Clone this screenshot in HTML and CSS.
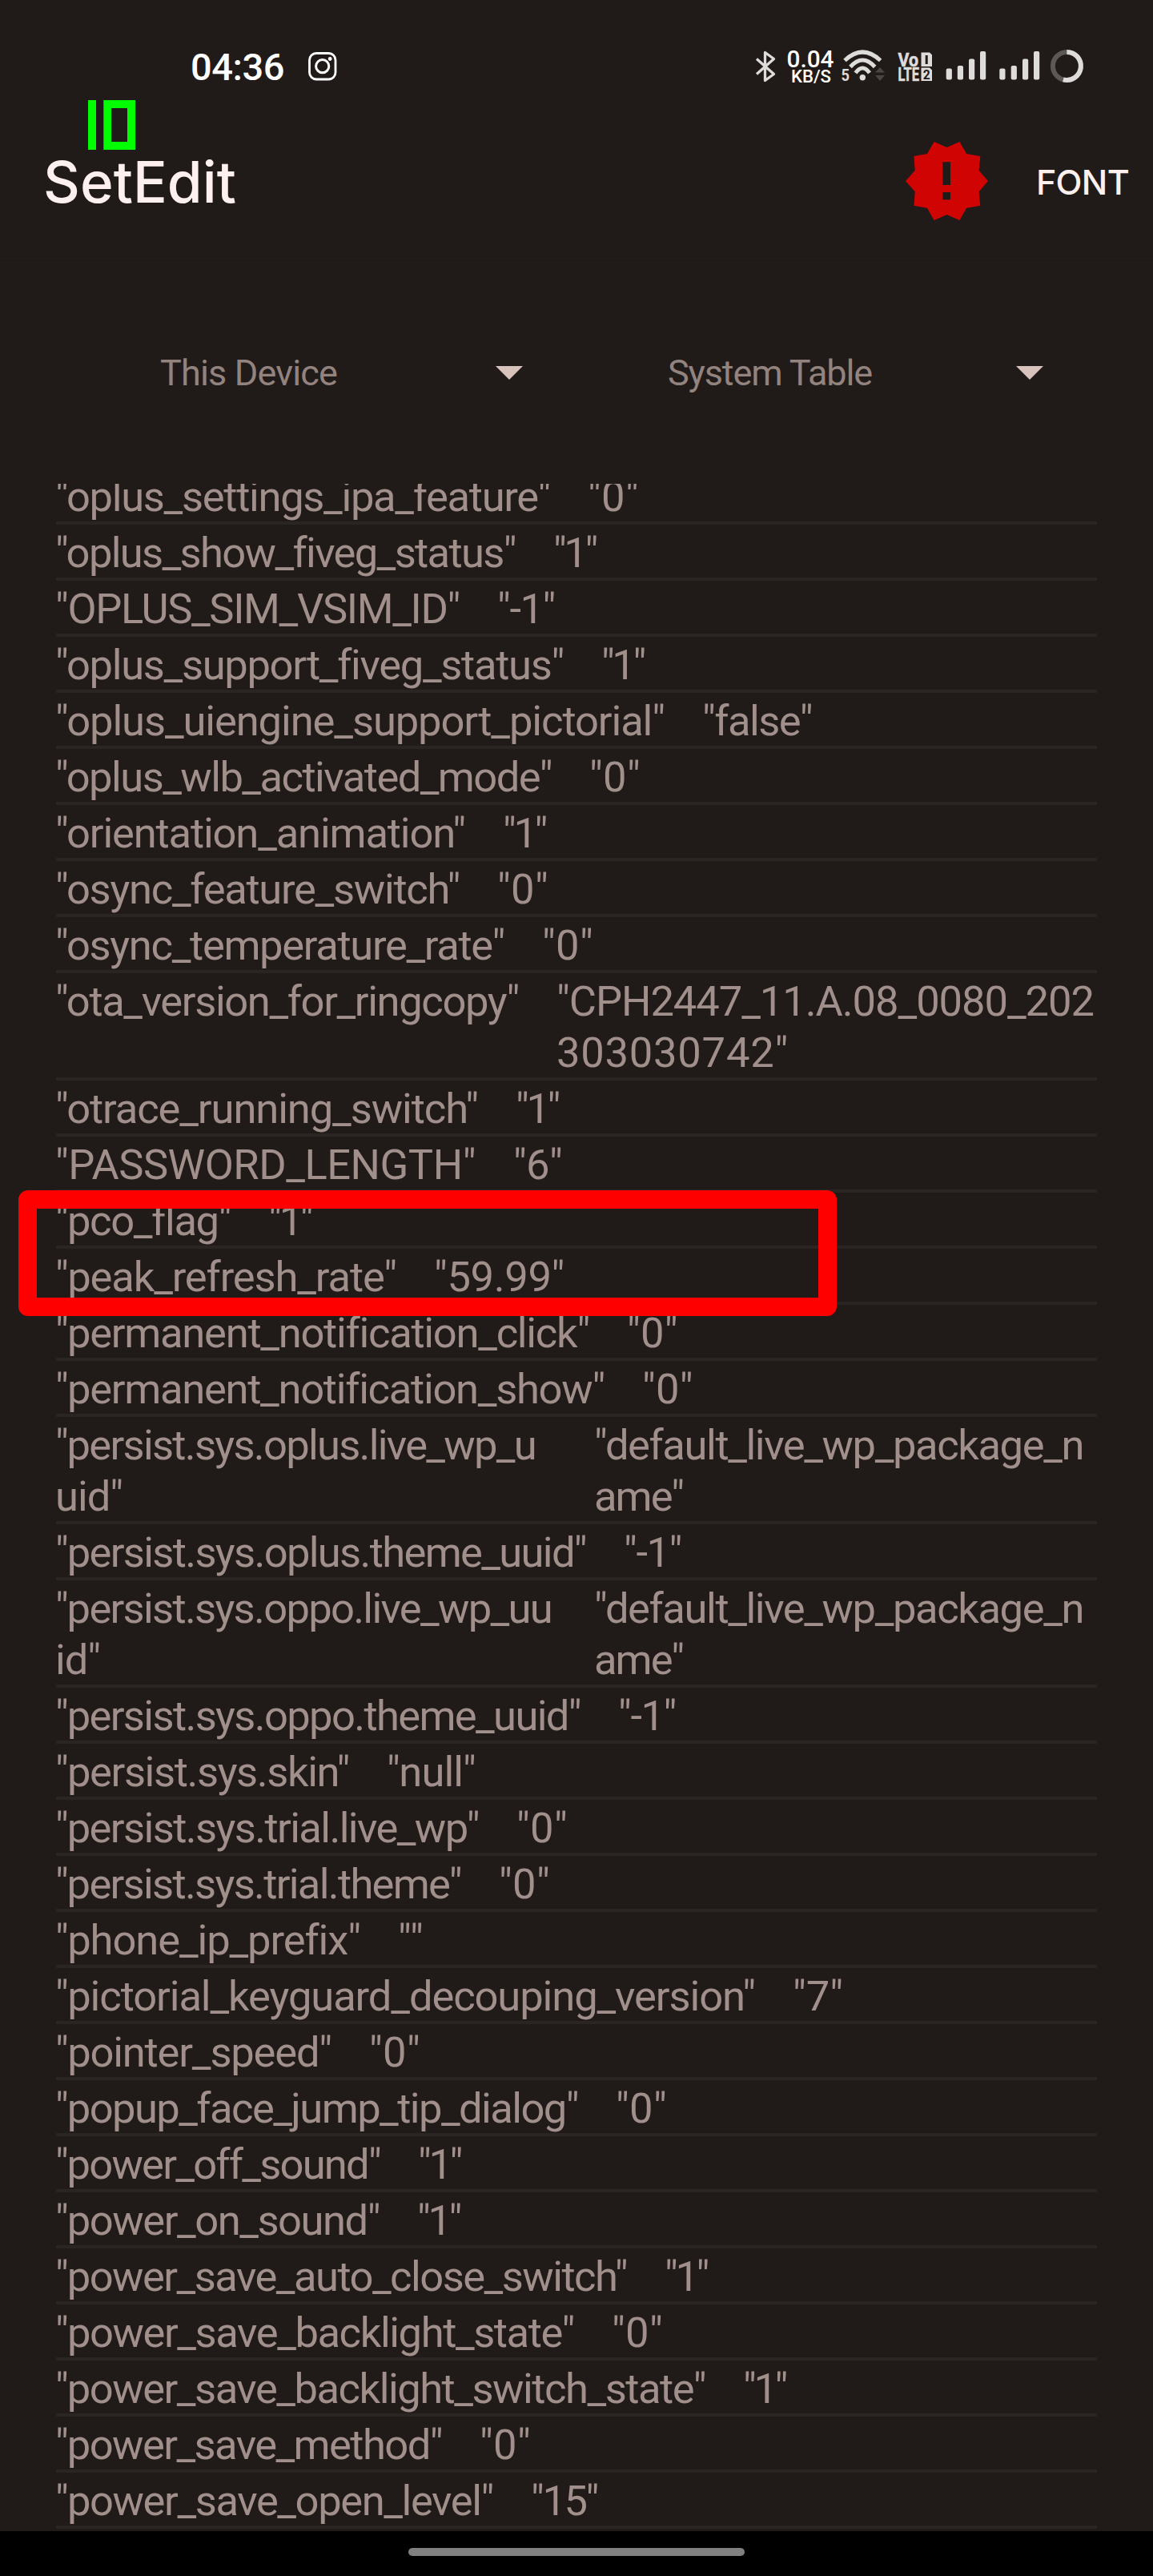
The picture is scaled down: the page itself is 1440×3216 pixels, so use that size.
FILE: index.html
```html
<!DOCTYPE html>
<html lang="en">
<head>
<meta charset="utf-8">
<title>SetEdit</title>
<link rel="stylesheet" href="styles.css">
</head>
<body>
<div class="screen">
  <div class="status">
    <span class="clock" data-w="117">04:36</span>
    <svg class="insta" width="36" height="36" viewBox="0 0 36 36" fill="none" stroke="#fff">
      <rect x="1.5" y="1.5" width="32.5" height="32.5" rx="8.5" stroke-width="2.8"/>
      <circle cx="17.7" cy="17.7" r="8.1" stroke-width="3"/>
      <circle cx="27.2" cy="8.5" r="2.4" fill="#fff" stroke="none"/>
    </svg>
    <svg class="tray" width="412" height="48" viewBox="942 58 412 48" fill="#dedcdb">
      <path d="M945 73.5 966.500 92.500 955.500 100.500V65.500L966.500 73.500 945 92.500" fill="none" stroke="#dedcdb" stroke-width="3.300" stroke-linejoin="round"/>
      <g fill="#fff" class="net">
        <text x="982.500" y="84" font-size="29.500" textLength="59" lengthAdjust="spacingAndGlyphs">0.04</text>
        <text x="988" y="103" font-size="22" textLength="50" lengthAdjust="spacingAndGlyphs">KB/S</text>
      </g>
      <g fill="none" stroke="#dedcdb" stroke-width="5">
        <path d="M1055 75.500Q1077.300 54.500 1099.600 75.500"/>
        <path d="M1062 83.500Q1077.300 66.500 1092.600 83.500"/>
        <path d="M1068.500 91Q1077.300 79 1086 91"/>
      </g>
      <circle cx="1077.300" cy="96.700" r="3.700"/>
      <text class="bold" x="1050.500" y="101" font-size="21" textLength="10.500" lengthAdjust="spacingAndGlyphs">5</text>
      <path d="M1093 90.500h12l-6-6.500zM1093 94h12l-6 7z" fill="#4a4542"/>
      <g class="bold">
        <text x="1121.500" y="82.500" font-size="24" textLength="25.500" lengthAdjust="spacingAndGlyphs" stroke="#dedcdb" stroke-width=".6">Vo</text>
        <text x="1121.500" y="101" font-size="23.500" textLength="26.500" lengthAdjust="spacingAndGlyphs" stroke="#dedcdb" stroke-width=".6">LTE</text>
        <path d="M1150.500 65.500h10.500l3 3v14.500h-13.500zM1150.500 84.500h10.500l3 3v13.500h-13.500z"/>
        <g fill="#201a18">
          <rect x="1155.700" y="69" width="3" height="11"/>
          <text x="1152.700" y="99" font-size="17" textLength="9" lengthAdjust="spacingAndGlyphs">2</text>
        </g>
      </g>
      <rect x="1181.700" y="85.500" width="7.200" height="14" rx="2"/>
      <rect x="1195.800" y="82" width="7.200" height="17.500" rx="2"/>
      <rect x="1210" y="73.500" width="7.200" height="26" rx="2"/>
      <rect x="1224" y="64" width="7.200" height="35.500" rx="2"/>
      <rect x="1248.300" y="85.500" width="7.200" height="14" rx="2"/>
      <rect x="1262.700" y="82" width="7.200" height="17.500" rx="2"/>
      <rect x="1277" y="73.500" width="7.200" height="26" rx="2"/>
      <rect x="1291" y="64" width="7.200" height="35.500" rx="2"/>
      <g fill="none" stroke-width="6">
        <circle cx="1332.400" cy="82.400" r="17.500" stroke="#5c5855"/>
        <path d="M1332.400 64.900A17.500 17.500 0 1 1 1327.900 99.300" stroke="#dedcdb"/>
      </g>
    </svg>
  </div>

  <header class="appbar">
    <h1 class="title" data-w="241">SetEdit</h1>
    <svg class="badge" width="103" height="98" viewBox="673 411 298 294" preserveAspectRatio="none">
      <path fill="#d10404" d="M776 411 822 432 868 411 893 456 943 465 938 518 971 558 938 598 943 650 893 659 868 705 822 684 776 705 751 659 703 650 707 598 673 558 707 518 703 465 751 456z"/>
      <path fill="#201a18" d="M807 487h28v86h-28zM807 600h28v28h-28z"/>
    </svg>
    <span class="font-btn" data-w="116">FONT</span>
  </header>

  <div class="selectors">
    <div class="select select-device"><span data-w="221">This Device</span><i class="arrow"></i></div>
    <div class="select select-table"><span data-w="255">System Table</span><i class="arrow"></i></div>
  </div>

  <main class="viewport"><div class="list" id="list"></div></main>

  <footer class="nav"><i class="pill"></i></footer>

  <svg class="mark" width="60" height="63" viewBox="0 0 60 63" fill="#0f0">
    <path d="M0 0h10v62H0zM19.300 0h39.700v62H19.300zM29 10v42h20V10z" fill-rule="evenodd"/>
  </svg>
  <i class="highlight"></i>
</div>
<script src="rows.js"></script>
</body>
</html>
```
FILE: styles.css
```css
* { box-sizing: border-box; }
body { margin: 0; background: #201a18; }
.screen {
  position: relative;
  width: 1440px;
  height: 3216px;
  overflow: hidden;
  display: flex;
  flex-direction: column;
  background: #201a18;
  font-family: Roboto, "Liberation Sans", sans-serif;
  color: #a08f8b;
}
.status {
  display: flex;
  align-items: center;
  height: 164px;
  padding: 0 86px 0 238px;
  flex: none;
}
.clock { font-size: 47px; font-weight: 500; color: #fff; line-height: 60px; margin-top: 3px; white-space: nowrap; }
.insta { margin-left: 30px; margin-top: 2px; }
.tray { margin-left: auto; }
.net { font-family: Roboto, sans-serif; font-weight: 500; }
.bold { font-family: Roboto, sans-serif; font-weight: 700; }
.appbar {
  display: flex;
  align-items: center;
  flex: none;
  height: 162px;
  padding: 0 30px 38px 54px;
  border-bottom: 1px solid #1d1715;
  color: #fdf0ee;
}
.title { margin: 3px 0 0; font: 500 71px/86px Inter, sans-serif; white-space: nowrap; }
.badge { margin-left: auto; }
.font-btn { margin: 2px 0 0 60px; font: 500 43px/54px Inter, sans-serif; white-space: nowrap; }
.selectors {
  display: grid;
  grid-template-columns: 634px 1fr;
  flex: none;
  height: 278px;
  padding: 112px 137px 0 200px;
  font-size: 45px;
  line-height: 56px;
  color: #93837f;
}
.select { display: flex; justify-content: space-between; align-items: flex-start; white-space: nowrap; }
.select-device { padding-right: 181px; }
.arrow {
  margin-top: 19px;
  border: solid transparent;
  border-width: 17px 17px 0;
  border-top-color: #d8c2bc;
}
.viewport { flex: 1; overflow: hidden; padding: 0 70px; min-height: 0; }
.list { margin-top: -19px; }
.row {
  display: flex;
  gap: 48px;
  padding-top: 3px;
  border-bottom: 4px solid #2a2522;
  font-size: 52.5px;
  line-height: 64px;
}
.row > div { margin: 0 0 -1px -1px; }
.key-narrow { width: 626px; }
.line { display: block; width: max-content; white-space: nowrap; }
.nav { flex: none; height: 56px; background: #000; display: flex; justify-content: center; padding-top: 21px; }
.pill { width: 420px; height: 10px; border-radius: 5px; background: #808080; }
.mark { position: absolute; left: 110px; top: 125px; }
.highlight {
  position: absolute;
  left: 23px;
  top: 1486px;
  width: 1022px;
  height: 157px;
  border: 23px solid #f00;
  border-radius: 12px;
}
```
FILE: rows.js
```javascript
// [key lines, key widths, value lines, value widths, narrow key column]
const rows = [
  ['"oplus_settings_ipa_feature"', 618, '"0"', 64],
  ['"oplus_show_fiveg_status"', 573, '"1"', 53],
  ['"OPLUS_SIM_VSIM_ID"', 505, '"-1"', 72],
  ['"oplus_support_fiveg_status"', 633, '"1"', 53],
  ['"oplus_uiengine_support_pictorial"', 761, '"false"', 137],
  ['"oplus_wlb_activated_mode"', 620, '"0"', 64],
  ['"orientation_animation"', 512, '"1"', 53],
  ['"osync_feature_switch"', 505, '"0"', 64],
  ['"osync_temperature_rate"', 561, '"0"', 64],
  ['"ota_version_for_ringcopy"', 579, ['"CPH2447_11.A.08_0080_202', '303030742"'], [671, 290]],
  ['"otrace_running_switch"', 528, '"1"', 53],
  ['"PASSWORD_LENGTH"', 525, '"6"', 61],
  ['"pco_flag"', 218, '"1"', 53],
  ['"peak_refresh_rate"', 426, '"59.99"', 163],
  ['"permanent_notification_click"', 665, '"0"', 64],
  ['"permanent_notification_show"', 684, '"0"', 64],
  [['"persist.sys.oplus.live_wp_u', 'uid"'], [600, 84], ['"default_live_wp_package_n', 'ame"'], [611, 111], true],
  ['"persist.sys.oplus.theme_uuid"', 663, '"-1"', 72],
  [['"persist.sys.oppo.live_wp_uu', 'id"'], [620, 56], ['"default_live_wp_package_n', 'ame"'], [611, 111], true],
  ['"persist.sys.oppo.theme_uuid"', 656, '"-1"', 72],
  ['"persist.sys.skin"', 367, '"null"', 111],
  ['"persist.sys.trial.live_wp"', 529, '"0"', 64],
  ['"persist.sys.trial.theme"', 507, '"0"', 64],
  ['"phone_ip_prefix"', 379, '""', 33],
  ['"pictorial_keyguard_decouping_version"', 874, '"7"', 63],
  ['"pointer_speed"', 345, '"0"', 64],
  ['"popup_face_jump_tip_dialog"', 653, '"0"', 64],
  ['"power_off_sound"', 406, '"1"', 53],
  ['"power_on_sound"', 405, '"1"', 53],
  ['"power_save_auto_close_switch"', 714, '"1"', 53],
  ['"power_save_backlight_state"', 648, '"0"', 64],
  ['"power_save_backlight_switch_state"', 812, '"1"', 53],
  ['"power_save_method"', 483, '"0"', 64],
  ['"power_save_open_level"', 547, '"15"', 83]
];

function cell(lines, widths) {
  const box = document.createElement('div');
  [].concat(lines).forEach((text, i) => {
    const line = document.createElement('span');
    line.className = 'line';
    line.textContent = text;
    line.dataset.w = [].concat(widths)[i];
    box.append(line);
  });
  return box;
}

const list = document.getElementById('list');
for (const [key, keyWidth, value, valueWidth, narrow] of rows) {
  const row = document.createElement('div');
  row.className = 'row';
  const keyCell = cell(key, keyWidth);
  if (narrow) keyCell.className = 'key-narrow';
  row.append(keyCell, cell(value, valueWidth));
  list.append(row);
}

// Track each label so that it fills its measured width.
document.querySelectorAll('[data-w]').forEach(el => {
  const natural = el.getBoundingClientRect().width;
  el.style.letterSpacing = (el.dataset.w - natural) / el.textContent.length + 'px';
});
```
